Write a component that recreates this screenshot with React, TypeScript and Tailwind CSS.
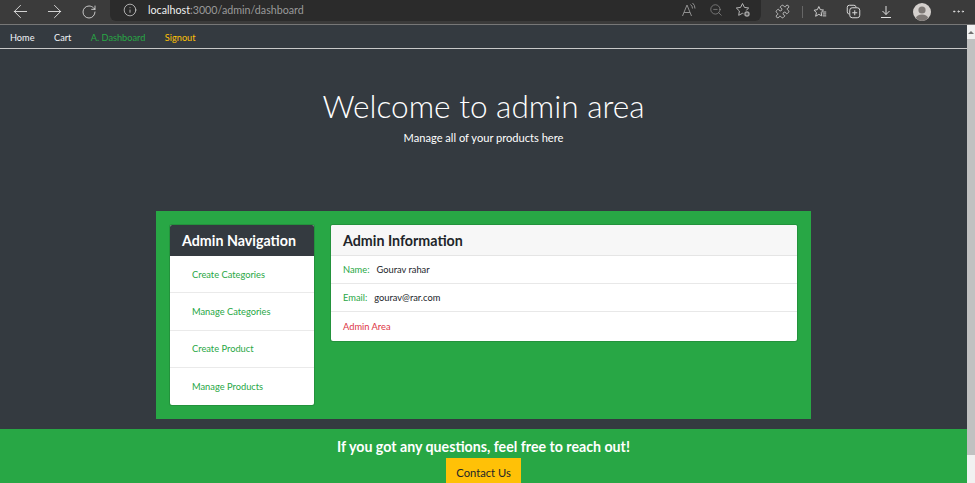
import React from 'react'
import { ArrowLeft, ArrowRight, RotateCw, Info, ZoomOut, Puzzle, MoreHorizontal } from 'lucide-react'

const font = "font-['Lato','Open_Sans',sans-serif]"

const ReadAloud = () => (
  <svg width="16" height="16" viewBox="0 0 16 16" fill="none" stroke="#8f8f8f" strokeWidth="1">
    <path d="M1.5 14 L6 3 L10.5 14 M3 10.5 H9" />
    <path d="M9.5 2.5 Q11.5 4 11.5 6.5 M11.5 1 Q14 3 14 6.5" />
  </svg>
)

const StarAdd = () => (
  <svg width="16" height="16" viewBox="0 0 16 16" fill="none" stroke="#b5b5b5" strokeWidth="1">
    <path d="M7.5 1.5 L9.4 5.4 L13.7 6 L10.6 9 L11.3 13.3 L7.5 11.3 L3.7 13.3 L4.4 9 L1.3 6 L5.6 5.4 Z" />
    <circle cx="12" cy="12" r="3.6" fill="#2b2b2b" stroke="none" />
    <circle cx="12" cy="12" r="2.7" fill="#a8a8a8" stroke="none" />
    <path d="M12 10.6 V13.4 M10.6 12 H13.4" stroke="#2b2b2b" strokeWidth="0.8" />
  </svg>
)

const Favorites = () => (
  <svg width="14" height="14" viewBox="0 0 18 18" fill="none" stroke="#d8d8d8" strokeWidth="1.2">
    <path d="M7.5 2 L9.4 6 L13.5 6.5 L10.5 9.5 L11.2 14 L7.5 12 L3.4 14.5 L4.4 10 L1.5 6.7 L5.6 6 Z" />
    <path d="M12 9 H17 M12.5 11.5 H17 M12.5 14 H17" />
  </svg>
)

const Collections = () => (
  <svg width="15" height="15" viewBox="0 0 18 18" fill="none" stroke="#d8d8d8" strokeWidth="1.2">
    <path d="M3.5 12 Q1.5 11.5 1.5 9.5 V4 Q1.5 1.5 4 1.5 H9.5 Q11.5 1.5 12 3.5" />
    <rect x="4.5" y="4.5" width="12" height="12" rx="3" />
    <path d="M10.5 7.5 V13.5 M7.5 10.5 H13.5" />
  </svg>
)

const DownloadLine = () => (
  <svg width="12" height="14" viewBox="0 0 12 14" fill="none" stroke="#e0e0e0" strokeWidth="1">
    <path d="M6 1 V9.5 M2.5 6 L6 9.5 L9.5 6 M1 12.5 H11" />
  </svg>
)

const Avatar = () => (
  <svg width="18" height="18" viewBox="0 0 18 18">
    <circle cx="9" cy="9" r="9" fill="#d4d0cd" />
    <circle cx="9" cy="7" r="3.6" fill="#7d7875" />
    <path d="M2.8 15 Q4 11.4 9 11.4 Q14 11.4 15.2 15 Q12.5 18 9 18 Q5.5 18 2.8 15 Z" fill="#7d7875" />
  </svg>
)

const BrowserBar = () => (
  <div className="flex h-[25px] shrink-0 items-center bg-[#3b3b3b] border-b border-[#777] pb-px">
    <div className="flex w-[110px] shrink-0 items-center pl-[10px] text-[#e8e8e8]">
      <ArrowLeft size={21} strokeWidth={1} />
      <ArrowRight size={21} strokeWidth={1} className="ml-[13px]" />
      <RotateCw size={16} strokeWidth={1.2} className="ml-[16px]" />
    </div>
    <div className="flex h-[21px] w-[651px] mb-[3px] items-center justify-between rounded-b-md bg-[#2b2b2b] pl-[13px] pr-[10px]">
      <div className="flex items-center gap-[11px]">
        <Info size={14} strokeWidth={1.2} className="text-[#e4e4e4]" />
        <span className="text-[10.7px]">
          <span className="text-[#f0f0f0]">localhost</span>
          <span className="text-[#9a9a9a]">:3000/admin/dashboard</span>
        </span>
      </div>
      <div className="flex items-center gap-[12px]">
        <ReadAloud />
        <ZoomOut size={14} strokeWidth={1.1} className="text-[#9a9a9a]" />
        <StarAdd />
      </div>
    </div>
    <div className="ml-[14px] flex items-center text-[#e4e4e4]">
      <Puzzle size={15} strokeWidth={1.2} />
      <div className="ml-[12px] h-[12px] w-px bg-[#666]" />
      <div className="ml-[10px] flex items-center gap-[19px]">
        <Favorites />
        <Collections />
        <DownloadLine />
      </div>
      <div className="ml-[21px]"><Avatar /></div>
      <MoreHorizontal size={15} strokeWidth={1.4} className="ml-[20px]" />
    </div>
  </div>
)

const navLinks = [
  { label: 'Home', cls: 'text-[#f2f4f8]' },
  { label: 'Cart', cls: 'text-[#f2f4f8]' },
  { label: 'A. Dashboard', cls: 'text-[#28a745]' },
  { label: 'Signout', cls: 'text-[#ffc107]' },
]

const adminLinks = ['Create Categories', 'Manage Categories', 'Create Product', 'Manage Products']

export default function App() {
  return (
    <div className={`flex h-[483px] w-[975px] flex-col overflow-hidden bg-[#343a40] ${font}`}>
      <BrowserBar />
      <div className="flex min-h-0 flex-1">
        <div className="flex min-w-0 flex-1 flex-col">
          <div className="flex h-[24px] shrink-0 items-center gap-[19.5px] border-b border-[#c8c8c8] pl-[10px] pt-[2px] text-[9.2px]">
            {navLinks.map((l) => (
              <span key={l.label} className={l.cls}>{l.label}</span>
            ))}
          </div>
          <div className="flex h-[162px] shrink-0 flex-col items-center pt-[36px] text-white">
            <h1 className="text-[31.6px] leading-[42px] font-light">Welcome to admin area</h1>
            <p className="mt-[2px] text-[11.1px] leading-[18px]">Manage all of your products here</p>
          </div>
          <div className="ml-[156px] flex h-[208px] w-[655px] shrink-0 items-start gap-[17px] bg-[#28a745] p-[14px]">
            <div className="w-[144px] shrink-0 overflow-hidden rounded-[2px] bg-white shadow-[0_0_0_1px_rgba(0,0,0,0.12)]">
              <div className="flex h-[31px] items-center bg-[#343a40] pl-[12px] pt-px text-[14.25px] font-bold text-white">
                Admin Navigation
              </div>
              {adminLinks.map((l) => (
                <div key={l} className="flex h-[37.25px] items-center border-b border-[#eaeaea] pl-[22px] pt-px text-[9.3px] text-[#28a745] last:border-b-0">
                  {l}
                </div>
              ))}
            </div>
            <div className="flex-1 overflow-hidden rounded-[2px] bg-white shadow-[0_0_0_1px_rgba(0,0,0,0.12)]">
              <div className="flex h-[31px] items-center border-b border-[#e5e5e5] bg-[#f7f7f7] pl-[12px] pt-px text-[14.25px] font-bold text-[#212529]">
                Admin Information
              </div>
              <div className="flex h-[28px] items-center gap-[7px] border-b border-[#e8e8e8] pl-[12px] text-[9.3px]">
                <span className="text-[#28a745]">Name:</span>
                <span className="text-[#212529]">Gourav rahar</span>
              </div>
              <div className="flex h-[28px] items-center gap-[7px] border-b border-[#e8e8e8] pl-[12px] text-[9.3px]">
                <span className="text-[#28a745]">Email:</span>
                <span className="text-[#212529]">gourav@rar.com</span>
              </div>
              <div className="flex h-[29px] items-center pl-[12px] text-[9.3px] text-[#dc3545]">Admin Area</div>
            </div>
          </div>
          <div className="h-[10px] shrink-0" />
          <div className="flex flex-1 flex-col items-center bg-[#28a745] pt-[8px]">
            <h3 className="text-[14.2px] leading-[20px] font-bold text-white">If you got any questions, feel free to reach out!</h3>
            <button className="mt-[1px] h-[30px] w-[75px] bg-[#ffc107] text-[11.2px] text-[#212529]">Contact Us</button>
          </div>
        </div>
        <div className="flex w-[8px] shrink-0 flex-col bg-[#f1f1f1]">
          <div className="flex h-[14px] items-center justify-center">
            <div className="border-x-[3px] border-b-[3px] border-x-transparent border-b-[#707070]" />
          </div>
          <div className="h-[416px] bg-[#c1c1c1]" />
        </div>
      </div>
    </div>
  )
}
